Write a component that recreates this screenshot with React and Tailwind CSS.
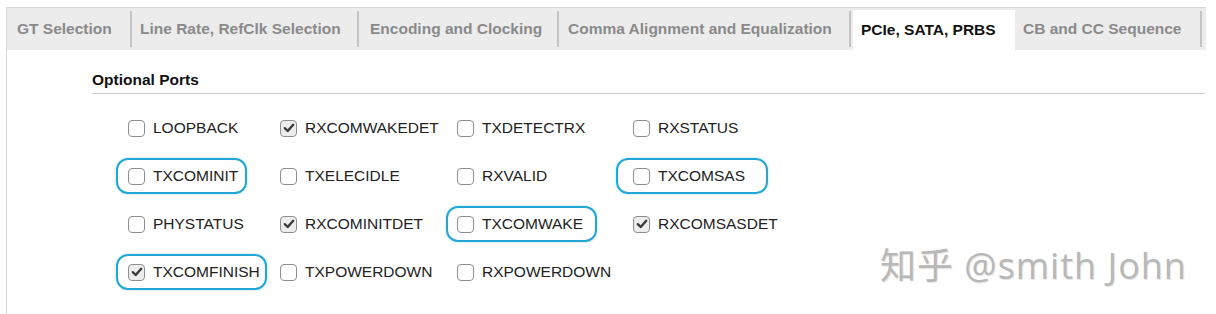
const tabs = [
  { label: 'GT Selection', w: 'w-[123px]', pl: 'pl-[10px]' },
  { label: 'Line Rate, RefClk Selection', w: 'w-[225px]', pl: 'pl-[8px]' },
  { label: 'Encoding and Clocking', w: 'w-[198px]', pl: 'pl-[11px]' },
  { label: 'Comma Alignment and Equalization', w: 'w-[290px]', pl: 'pl-[9px]' },
  { label: 'PCIe, SATA, PRBS', w: 'w-[162px]', pl: 'pl-[8px]', active: true },
  { label: 'CB and CC Sequence', w: 'w-[185px]', pl: 'pl-[8px]' },
]

const ports = [
  { name: 'LOOPBACK' },
  { name: 'RXCOMWAKEDET', checked: true },
  { name: 'TXDETECTRX' },
  { name: 'RXSTATUS' },
  { name: 'TXCOMINIT', ring: 'left-[-12px] w-[131px]' },
  { name: 'TXELECIDLE' },
  { name: 'RXVALID' },
  { name: 'TXCOMSAS', ring: 'left-[-17px] w-[152px]' },
  { name: 'PHYSTATUS' },
  { name: 'RXCOMINITDET', checked: true },
  { name: 'TXCOMWAKE', ring: 'left-[-11px] w-[151px]' },
  { name: 'RXCOMSASDET', checked: true },
  { name: 'TXCOMFINISH', checked: true, ring: 'left-[-12px] w-[151px]' },
  { name: 'TXPOWERDOWN' },
  { name: 'RXPOWERDOWN' },
]

function Checkbox({ checked }) {
  return (
    <span
      className={
        'flex h-[17px] w-[17px] shrink-0 items-center justify-center rounded-[4px] border-[1.5px] border-[#8e8e8e] ' +
        (checked ? 'bg-[#ededed]' : 'bg-white')
      }
    >
      {checked && (
        <svg width="12" height="12" viewBox="0 0 12 12">
          <path d="M1.8 6.2 L4.7 9 L10.2 2.8" fill="none" stroke="#3a3a3a" strokeWidth="2.4" strokeLinecap="round" strokeLinejoin="round" />
        </svg>
      )}
    </span>
  )
}

export default function App() {
  return (
    <div className="relative h-[314px] w-[1216px] overflow-hidden bg-white pt-[7px] font-['Liberation_Sans',Arial,sans-serif]">
      <div className="ml-[6px] h-[307px] w-[1200px] border-l border-t border-[#d6d6d6]">
        {/* tab bar */}
        <div className="flex h-[42px] items-stretch bg-[#ececec]">
          {tabs.map((t, i) => (
            <div key={t.label} className="flex items-stretch">
              <div
                className={
                  'flex items-center text-[15.5px] font-bold whitespace-nowrap ' +
                  t.w + ' ' + t.pl + ' ' +
                  (t.active ? 'mt-[2px] bg-white text-[#111]' : 'text-[#8a8a8a]')
                }
              >
                {t.label}
              </div>
              {!t.active && i !== 3 && (
                <div className="my-[3px] w-[2px] bg-[#c4c4c4]" />
              )}
              {i === 3 && <div className="my-[3px] mr-[2px] w-[2px] bg-[#c4c4c4]" />}
            </div>
          ))}
        </div>

        {/* content */}
        <div className="pl-[85px] pt-[20px]">
          <div className="w-[1113px] border-b border-[#cfcfcf] pb-[3px] text-[15.5px] font-bold leading-[20px] text-[#111]">
            Optional Ports
          </div>
          <div className="mt-[10px] ml-[36px] grid grid-cols-[152px_177px_176px_200px] auto-rows-[48px]">
            {ports.map((p) => (
              <div key={p.name} className="relative flex items-center">
                {p.ring && (
                  <span
                    className={
                      'pointer-events-none absolute top-[6px] h-[36px] rounded-[12px] border-[2.5px] border-[#22a6d6] shadow-[0_0_3px_rgba(34,166,214,0.35)] ' +
                      p.ring
                    }
                  />
                )}
                <Checkbox checked={p.checked} />
                <span className="ml-[8px] text-[15.5px] leading-none text-[#222] whitespace-nowrap">
                  {p.name}
                </span>
              </div>
            ))}
          </div>
        </div>
      </div>

      <div className="absolute left-[880px] top-[243px] font-['Open_Sans','Noto_Sans_CJK_SC',sans-serif] text-[36px] leading-[46px] tracking-[1px] text-[#b8b8b8] [text-shadow:1px_1px_1px_rgba(0,0,0,0.12)] whitespace-nowrap">
        知乎 @smith John
      </div>
    </div>
  )
}
